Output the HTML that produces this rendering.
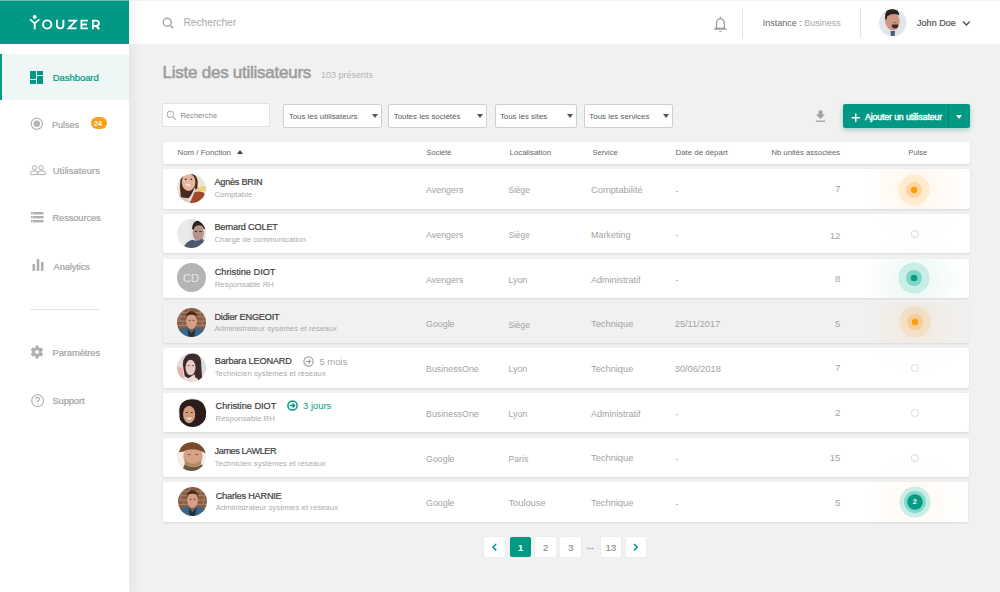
<!DOCTYPE html>
<html><head><meta charset="utf-8"><title>Youzer</title><style>
*{margin:0;padding:0;box-sizing:border-box}
html,body{width:1000px;height:592px;overflow:hidden;background:#f1f1f1;font-family:"Liberation Sans", sans-serif;position:relative}
.t{position:absolute;line-height:0;white-space:nowrap}
#side{position:absolute;left:0;top:0;width:129px;height:592px;background:#fff;box-shadow:0 0 16px rgba(0,0,0,0.09);z-index:0}
#logo{position:absolute;left:0;top:0;width:129px;height:44px;background:#029984}
#top{position:absolute;left:129px;top:0;width:871px;height:44px;background:#fff}
.box{position:absolute;background:#fff;border:1px solid #ddd;border-radius:2px}
.tri{position:absolute;width:0;height:0;border-left:3px solid transparent;border-right:3px solid transparent;border-top:4.5px solid #555}
.card{position:absolute;background:#fff;border-radius:2px;box-shadow:0 1px 2.5px rgba(0,0,0,0.1)}
.dot{position:absolute;border-radius:50%}
</style></head>
<body>
<div id="top"></div>
<div id="side"></div>
<div id="logo"></div>
<svg style="position:absolute;left:0;top:0" width="129" height="44" viewBox="0 0 129 44">
<g fill="none" stroke="#fff" stroke-width="1.85" stroke-linecap="butt" stroke-linejoin="miter">
<circle cx="34.7" cy="16.9" r="1.85" fill="#fff" stroke="none"/>
<path d="M30.6 19.9 L34.7 23.4 L38.8 19.9" stroke-linecap="round" stroke-width="1.8"/><path d="M34.7 23.2 V29.25" stroke-width="1.8"/>
<circle cx="47.2" cy="24.45" r="4.15"/>
<path d="M56.9 19.75 V25.3 Q56.9 28.4 60.15 28.4 Q63.4 28.4 63.4 25.3 V19.75"/>
<path d="M68.3 20.6 H75.9 L68.6 28.4 H76.5"/>
<path d="M87.8 20.6 H81.4 V28.4 H87.8 M81.4 24.5 H87"/>
<path d="M92.9 29.25 V20.6 H96 Q98.9 20.6 98.9 23.3 Q98.9 26 96 26 H92.9 M96.2 26 L99.3 29.25"/>
</g></svg>
<div style="position:absolute;left:0;top:54.4px;width:129px;height:45.2px;background:#eef7f5"></div>
<div style="position:absolute;left:0;top:54.4px;width:2px;height:45.2px;background:#029984"></div>
<svg style="position:absolute;left:30px;top:71px" width="14" height="14" viewBox="0 0 14 14">
<g fill="#029984"><rect x="0" y="0" width="6" height="8"/><rect x="0" y="9" width="6" height="4"/>
<rect x="7" y="0" width="6" height="4"/><rect x="7" y="5" width="6" height="8"/></g></svg>
<div class="t" style="left:52.70px;top:78.11px;font-size:9.5px;color:#029984;font-weight:400;letter-spacing:-0.05px;-webkit-text-stroke:0.22px #029984;">Dashboard</div>
<svg style="position:absolute;left:30px;top:117px" width="14" height="14" viewBox="0 0 14 14">
<circle cx="6.8" cy="6.8" r="5.6" fill="none" stroke="#b5b5b5" stroke-width="1.2"/>
<circle cx="6.8" cy="6.8" r="3.2" fill="#b5b5b5"/></svg>
<div class="t" style="left:52.00px;top:124.88px;font-size:9.0px;color:#a3a3a3;font-weight:400;letter-spacing:0px;-webkit-text-stroke:0.22px #a3a3a3;">Pulses</div>
<div style="position:absolute;left:90.7px;top:116.9px;width:16px;height:12.6px;border-radius:6.3px;background:#f9a11b"></div>
<div class="t" style="left:94.00px;top:123.67px;font-size:7.0px;color:#fff;font-weight:700;letter-spacing:0.1px;">24</div>
<svg style="position:absolute;left:29.5px;top:165px" width="16" height="11" viewBox="0 0 16 11">
<g fill="none" stroke="#b0b0b0" stroke-width="1">
<circle cx="4.5" cy="2.6" r="2.1"/><circle cx="11" cy="2.6" r="2.1"/>
<path d="M0.6 9.6 V8 Q0.6 6 3 6 H6.5 Q8 6 8 8 V9.6 Z"/><path d="M7.7 9.6 V8 Q7.7 6 10 6 H13 Q15.3 6 15.3 8 V9.6 Z"/>
</g></svg>
<div class="t" style="left:52.80px;top:170.88px;font-size:9.3px;color:#a3a3a3;font-weight:400;letter-spacing:0.1px;-webkit-text-stroke:0.22px #a3a3a3;">Utilisateurs</div>
<svg style="position:absolute;left:31px;top:212px" width="13" height="11" viewBox="0 0 13 11">
<g fill="#b0b0b0"><rect x="0" y="0" width="12.5" height="2.4"/><rect x="0" y="4" width="12.5" height="2.4"/><rect x="0" y="8" width="12.5" height="2.4"/></g>
<g fill="#fff"><rect x="1" y="0.8" width="1" height="0.8"/><rect x="1" y="4.8" width="1" height="0.8"/><rect x="1" y="8.8" width="1" height="0.8"/></g></svg>
<div class="t" style="left:52.50px;top:217.78px;font-size:9.3px;color:#a3a3a3;font-weight:400;letter-spacing:-0.1px;-webkit-text-stroke:0.22px #a3a3a3;">Ressources</div>
<svg style="position:absolute;left:32px;top:258px" width="13" height="13" viewBox="0 0 13 13">
<g fill="#b0b0b0"><rect x="0.5" y="6" width="2.6" height="6.9"/><rect x="4.7" y="1" width="2.6" height="11.9"/><rect x="8.9" y="4" width="2.6" height="8.9"/></g></svg>
<div class="t" style="left:53.60px;top:266.78px;font-size:9.3px;color:#a3a3a3;font-weight:400;letter-spacing:-0.1px;-webkit-text-stroke:0.22px #a3a3a3;">Analytics</div>
<div style="position:absolute;left:29.7px;top:308.6px;width:70px;height:1px;background:#e3e3e3"></div>
<svg style="position:absolute;left:29.1px;top:343.9px" width="16" height="16" viewBox="0 0 24 24">
<path fill="#b0b0b0" d="M19.14 12.94c.04-.3.06-.61.06-.94 0-.32-.02-.64-.07-.94l2.03-1.58a.49.49 0 0 0 .12-.61l-1.92-3.32a.49.49 0 0 0-.59-.22l-2.39.96c-.5-.38-1.03-.7-1.62-.94l-.36-2.54a.48.48 0 0 0-.48-.41h-3.84c-.24 0-.43.17-.47.41l-.36 2.54c-.59.24-1.13.57-1.62.94l-2.39-.96a.48.48 0 0 0-.59.22L2.74 8.87c-.12.21-.08.47.12.61l2.03 1.58c-.05.3-.09.63-.09.94s.02.64.07.94l-2.03 1.58a.49.49 0 0 0-.12.61l1.92 3.32c.12.22.37.29.59.22l2.39-.96c.5.38 1.03.7 1.62.94l.36 2.54c.05.24.24.41.48.41h3.84c.24 0 .44-.17.47-.41l.36-2.54c.59-.24 1.13-.56 1.62-.94l2.39.96c.22.08.47 0 .59-.22l1.92-3.32c.12-.22.07-.47-.12-.61l-2.01-1.58zM12 14.9c-1.6 0-2.9-1.3-2.9-2.9s1.3-2.9 2.9-2.9 2.9 1.3 2.9 2.9-1.3 2.9-2.9 2.9z"/></svg>
<div class="t" style="left:52.50px;top:353.38px;font-size:9.3px;color:#a3a3a3;font-weight:400;letter-spacing:-0.05px;-webkit-text-stroke:0.22px #a3a3a3;">Paramètres</div>
<svg style="position:absolute;left:30.5px;top:393.5px" width="14" height="14" viewBox="0 0 14 14">
<circle cx="6.6" cy="6.6" r="5.9" fill="none" stroke="#b0b0b0" stroke-width="1.1"/>
<path d="M4.8 5.2 Q4.8 3.3 6.6 3.3 Q8.4 3.3 8.4 5 Q8.4 6 7.4 6.6 Q6.6 7.1 6.6 8.1" fill="none" stroke="#b0b0b0" stroke-width="1.25"/>
<circle cx="6.6" cy="9.9" r="0.6" fill="#b0b0b0"/></svg>
<div class="t" style="left:52.50px;top:401.08px;font-size:9.3px;color:#a3a3a3;font-weight:400;letter-spacing:-0.1px;-webkit-text-stroke:0.22px #a3a3a3;">Support</div>
<svg style="position:absolute;left:162px;top:16.5px" width="13" height="12" viewBox="0 0 13 12">
<circle cx="5.2" cy="5.2" r="4" fill="none" stroke="#aaa" stroke-width="1.5"/><path d="M8.1 8.1 L11.3 11.2" stroke="#aaa" stroke-width="1.6"/></svg>
<div class="t" style="left:183.50px;top:23.37px;font-size:10.2px;color:#a8a8a8;font-weight:400;letter-spacing:0px;">Rechercher</div>
<svg style="position:absolute;left:713px;top:15px" width="15" height="18" viewBox="0 0 15 18">
<path d="M3.5 14 V8.6 Q3.5 3.9 7.4 3.9 Q11.3 3.9 11.3 8.6 V14" fill="none" stroke="#a3a3a3" stroke-width="1.4"/>
<path d="M1.2 14.4 H13.6 L12.2 13 H2.6 Z" fill="#a3a3a3" stroke="#a3a3a3" stroke-width="0.8" stroke-linejoin="round"/>
<path d="M7.4 1.6 V4" stroke="#a3a3a3" stroke-width="1.6"/><path d="M6.2 16.5 H8.6" stroke="#a3a3a3" stroke-width="1"/></svg>
<div style="position:absolute;left:742.3px;top:7px;width:1px;height:30.5px;background:#e4e4e4"></div>
<div style="position:absolute;left:860.2px;top:7px;width:1px;height:30.5px;background:#e4e4e4"></div>
<div class="t" style="left:762.70px;top:22.78px;font-size:9.0px;color:#666;font-weight:400;letter-spacing:0px;">Instance : <span style="color:#a5a5a5">Business</span></div>
<div class="t" style="left:917.00px;top:23.08px;font-size:9.0px;color:#505050;font-weight:400;letter-spacing:0.05px;-webkit-text-stroke:0.2px #505050;">John Doe</div>
<svg style="position:absolute;left:962px;top:20px" width="9" height="7" viewBox="0 0 9 7">
<path d="M1 1.5 L4.4 5 L7.8 1.5" fill="none" stroke="#555" stroke-width="1.5"/></svg>
<svg style="position:absolute;left:879.25px;top:8.55px" width="27.5" height="27.5" viewBox="0 0 30 30"><defs><clipPath id="cj"><circle cx="15" cy="15" r="15"/></clipPath><filter id="fj" x="-5%" y="-5%" width="110%" height="110%"><feGaussianBlur stdDeviation="0.45"/></filter></defs><g clip-path="url(#cj)"><g filter="url(#fj)"><rect width="30" height="30" fill="#e3e5ea"/>
   <path d="M4 30 L5 22 Q14 19 25 21 L27 30 Z" fill="#dce5f0"/>
   <ellipse cx="14.5" cy="13" rx="8" ry="10.5" fill="#cc9a82" transform="rotate(-12 14.5 13)"/>
   <path d="M6.5 10 Q6 0 14 0 Q22 0 22 7 L20 6 Q14 4 9 8 L8 12 Z" fill="#2b2420"/>
   <ellipse cx="17.5" cy="18" rx="3.4" ry="3.2" fill="#4a2222"/>
   <path d="M14.5 16.2 H20.5" stroke="#f0e8e4" stroke-width="1"/>
   <path d="M12.5 24 L17.5 24 L17 30 L13 30 Z" fill="#4d5b74"/></g></g></svg>
<div class="t" style="left:162.60px;top:72.71px;font-size:17.0px;color:#9d9d9d;font-weight:400;letter-spacing:-0.25px;-webkit-text-stroke:0.55px #9d9d9d;">Liste des utilisateurs</div>
<div class="t" style="left:321.00px;top:74.88px;font-size:9.0px;color:#b3b3b3;font-weight:400;letter-spacing:0px;">103 présents</div>
<div class="box" style="left:162.2px;top:103.4px;width:107.5px;height:24px;border-color:#e2e2e2"></div>
<svg style="position:absolute;left:165.5px;top:110px" width="11" height="11" viewBox="0 0 11 11">
<circle cx="4.3" cy="4.3" r="3.3" fill="none" stroke="#aaa" stroke-width="1"/><path d="M6.7 6.7 L9.6 9.6" stroke="#aaa" stroke-width="1.1"/></svg>
<div class="t" style="left:180.40px;top:116.47px;font-size:7.6px;color:#8a8a8a;font-weight:400;letter-spacing:0px;">Recherche</div>
<div class="box" style="left:283.4px;top:104px;width:99.1px;height:24px;border-color:#cfcfcf"></div>
<div class="t" style="left:288.70px;top:117.36px;font-size:7.9px;color:#5a5a5a;font-weight:400;letter-spacing:0px;">Tous les utilisateurs</div>
<div class="tri" style="left:372.0px;top:114px"></div>
<div class="box" style="left:388.4px;top:104px;width:99.0px;height:24px;border-color:#cfcfcf"></div>
<div class="t" style="left:393.70px;top:117.36px;font-size:7.9px;color:#5a5a5a;font-weight:400;letter-spacing:0px;">Toutes les sociétés</div>
<div class="tri" style="left:476.9px;top:114px"></div>
<div class="box" style="left:494.6px;top:104px;width:82.8px;height:24px;border-color:#cfcfcf"></div>
<div class="t" style="left:499.90px;top:117.36px;font-size:7.9px;color:#5a5a5a;font-weight:400;letter-spacing:0px;">Tous les sites</div>
<div class="tri" style="left:566.9px;top:114px"></div>
<div class="box" style="left:584.0px;top:104px;width:89.1px;height:24px;border-color:#cfcfcf"></div>
<div class="t" style="left:589.30px;top:117.36px;font-size:7.9px;color:#5a5a5a;font-weight:400;letter-spacing:0px;">Tous les services</div>
<div class="tri" style="left:662.6px;top:114px"></div>
<svg style="position:absolute;left:815px;top:109.5px" width="11" height="13" viewBox="0 0 11 13">
<path d="M3.5 0.5 H7.5 V4.5 H10 L5.5 9 L1 4.5 H3.5 Z" fill="#a3a3a3"/><rect x="0.8" y="10.5" width="9.4" height="1.4" fill="#a3a3a3"/></svg>
<div style="position:absolute;left:843px;top:104px;width:126.5px;height:23.5px;border-radius:2px;background:#029984;box-shadow:0 2px 5px rgba(2,153,132,0.35)"></div>
<div style="position:absolute;left:948.3px;top:104px;width:0.8px;height:23.5px;background:rgba(0,0,0,0.12)"></div>
<svg style="position:absolute;left:851px;top:112.5px" width="10" height="10" viewBox="0 0 10 10">
<path d="M4.7 0.6 V9 M0.6 4.8 H8.9" stroke="#fff" stroke-width="1.5"/></svg>
<div class="t" style="left:865.00px;top:116.79px;font-size:8.7px;color:#fff;font-weight:400;letter-spacing:-0.1px;-webkit-text-stroke:0.4px #fff;">Ajouter un utilisateur</div>
<div class="tri" style="left:955.5px;top:115px;border-top-color:#fff;border-left-width:3.4px;border-right-width:3.4px;border-top-width:4px"></div>
<div class="card" style="left:162.5px;top:141.8px;width:807.5px;height:22.3px"></div>
<div class="t" style="left:177.50px;top:153.26px;font-size:7.9px;color:#666;font-weight:400;letter-spacing:0px;">Nom / Fonction</div>
<div class="tri" style="left:236.9px;top:150.3px;border-top:0;border-bottom:4px solid #444;border-left-width:3px;border-right-width:3px"></div>
<div class="t" style="left:426.50px;top:153.40px;font-size:7.5px;color:#666;font-weight:400;letter-spacing:0px;">Société</div>
<div class="t" style="left:509.60px;top:153.28px;font-size:7.85px;color:#666;font-weight:400;letter-spacing:0px;">Localisation</div>
<div class="t" style="left:592.40px;top:153.37px;font-size:7.6px;color:#666;font-weight:400;letter-spacing:0px;">Service</div>
<div class="t" style="left:675.50px;top:153.26px;font-size:7.9px;color:#666;font-weight:400;letter-spacing:0px;">Date de départ</div>
<div class="t" style="left:771.40px;top:153.33px;font-size:7.7px;color:#666;font-weight:400;letter-spacing:0px;">Nb unités associées</div>
<div class="t" style="left:908.50px;top:153.42px;font-size:7.45px;color:#666;font-weight:400;letter-spacing:0px;">Pulse</div>
<div class="card" style="left:162.5px;top:169.20px;width:807.30px;height:39.4px;background:#fff;overflow:hidden"><div style="position:absolute;left:702.0px;top:-29.60px;width:100px;height:100px;background:radial-gradient(circle 50px at 50px 50px, rgba(255,170,60,0.110), rgba(255,170,60,0.050) 55%, rgba(255,170,60,0) 100%)"></div></div>
<div class="card" style="left:162.5px;top:213.94px;width:807.10px;height:39.4px;background:#fff;overflow:hidden"><div style="position:absolute;left:702.0px;top:-74.34px;width:100px;height:100px;background:radial-gradient(circle 50px at 50px 50px, rgba(255,170,60,0.044), rgba(255,170,60,0.020) 55%, rgba(255,170,60,0) 100%)"></div><div style="position:absolute;left:702.0px;top:15.14px;width:100px;height:100px;background:radial-gradient(circle 50px at 50px 50px, rgba(60,190,170,0.044), rgba(60,190,170,0.020) 55%, rgba(60,190,170,0) 100%)"></div></div>
<div class="card" style="left:162.5px;top:258.68px;width:806.90px;height:39.4px;background:#fff;overflow:hidden"><div style="position:absolute;left:702.0px;top:-29.60px;width:100px;height:100px;background:radial-gradient(circle 50px at 50px 50px, rgba(60,190,170,0.110), rgba(60,190,170,0.050) 55%, rgba(60,190,170,0) 100%)"></div><div style="position:absolute;left:702.0px;top:15.14px;width:100px;height:100px;background:radial-gradient(circle 50px at 50px 50px, rgba(255,170,60,0.044), rgba(255,170,60,0.020) 55%, rgba(255,170,60,0) 100%)"></div></div>
<div class="card" style="left:162.5px;top:303.42px;width:806.70px;height:39.4px;background:#f1f1f1;overflow:hidden"><div style="position:absolute;left:702.0px;top:-74.34px;width:100px;height:100px;background:radial-gradient(circle 50px at 50px 50px, rgba(60,190,170,0.044), rgba(60,190,170,0.020) 55%, rgba(60,190,170,0) 100%)"></div><div style="position:absolute;left:702.0px;top:-29.60px;width:100px;height:100px;background:radial-gradient(circle 50px at 50px 50px, rgba(255,170,60,0.110), rgba(255,170,60,0.050) 55%, rgba(255,170,60,0) 100%)"></div></div>
<div class="card" style="left:162.5px;top:348.16px;width:806.50px;height:39.4px;background:#fff;overflow:hidden"><div style="position:absolute;left:702.0px;top:-74.34px;width:100px;height:100px;background:radial-gradient(circle 50px at 50px 50px, rgba(255,170,60,0.044), rgba(255,170,60,0.020) 55%, rgba(255,170,60,0) 100%)"></div></div>
<div class="card" style="left:162.5px;top:392.90px;width:806.30px;height:39.4px;background:#fff;overflow:hidden"></div>
<div class="card" style="left:162.5px;top:437.64px;width:806.10px;height:39.4px;background:#fff;overflow:hidden"><div style="position:absolute;left:702.0px;top:15.14px;width:100px;height:100px;background:radial-gradient(circle 50px at 50px 50px, rgba(255,200,140,0.044), rgba(255,200,140,0.020) 55%, rgba(255,200,140,0) 100%)"></div></div>
<div class="card" style="left:162.5px;top:482.38px;width:805.90px;height:39.4px;background:#fff;overflow:hidden"><div style="position:absolute;left:702.0px;top:-29.60px;width:100px;height:100px;background:radial-gradient(circle 50px at 50px 50px, rgba(255,200,140,0.110), rgba(255,200,140,0.050) 55%, rgba(255,200,140,0) 100%)"></div></div>
<svg style="position:absolute;left:177.00px;top:174.00px" width="29" height="29" viewBox="0 0 30 30"><defs><clipPath id="c0"><circle cx="15" cy="15" r="15"/></clipPath><filter id="f0" x="-5%" y="-5%" width="110%" height="110%"><feGaussianBlur stdDeviation="0.45"/></filter></defs><g clip-path="url(#c0)"><g filter="url(#f0)"><rect width="30" height="30" fill="#ede2d6"/>
   <path d="M18 0 H30 V20 L22 16 Z" fill="#ece2d6"/>
   <path d="M19 14 L30 12.5 L30 17.5 L21 17.5 Z" fill="#ecd27a"/>
   <path d="M2 30 V21 L9 22 L13 30 Z" fill="#d6cdc4"/>
   <path d="M3.5 6 Q5 -1 13 -0.5 Q21 0 21.5 8 L21 15 L17 19 L12 25 L4 24 L3 14 Z" fill="#4b2c20"/>
   <ellipse cx="12" cy="8.5" rx="7" ry="9" fill="#e6b69c"/>
   <ellipse cx="9" cy="5.5" rx="1" ry="0.8" fill="#3a2a22"/><ellipse cx="14.8" cy="5.5" rx="1" ry="0.8" fill="#3a2a22"/>
   <path d="M8.5 10.8 Q11.3 14.2 14.2 10.8 Z" fill="#fbf4f0"/>
   <path d="M13 30 L17.5 19 Q22 17 27 19 L30 22 V30 Z" fill="#a14a2a"/>
   <path d="M11 30 L18 14.5 L19.6 15.3 L13.2 30 Z" fill="#dcd8d4"/></g></g></svg>
<div class="t" style="left:214.40px;top:182.41px;font-size:9.2px;color:#3f3f3f;font-weight:400;letter-spacing:-0.25px;-webkit-text-stroke:0.22px #3f3f3f;">Agnès BRIN</div>
<div class="t" style="left:214.40px;top:195.18px;font-size:7.85px;color:#ababab;font-weight:400;letter-spacing:0px;">Comptable</div>
<div class="t" style="left:426.00px;top:190.12px;font-size:8.9px;color:#a3a3a3;font-weight:400;letter-spacing:0px;">Avengers</div>
<div class="t" style="left:508.40px;top:190.29px;font-size:8.4px;color:#a3a3a3;font-weight:400;letter-spacing:0px;">Siège</div>
<div class="t" style="left:591.00px;top:189.98px;font-size:9.3px;color:#a3a3a3;font-weight:400;letter-spacing:0px;">Comptabilité</div>
<div class="t" style="left:675.50px;top:191.66px;font-size:8.2px;color:#a3a3a3;font-weight:400;letter-spacing:0px;">-</div>
<div class="t" style="right:159.60px;top:189.47px;font-size:9.6px;color:#a3a3a3;font-weight:400;letter-spacing:0px;">7</div>
<svg style="position:absolute;left:177.00px;top:218.74px" width="29" height="29" viewBox="0 0 30 30"><defs><clipPath id="c1"><circle cx="15" cy="15" r="15"/></clipPath><filter id="f1" x="-5%" y="-5%" width="110%" height="110%"><feGaussianBlur stdDeviation="0.45"/></filter></defs><g clip-path="url(#c1)"><g filter="url(#f1)"><rect width="30" height="30" fill="#e2e2e2"/>
   <rect x="0" y="0" width="13" height="30" fill="#eaeaea"/>
   <ellipse cx="22" cy="14.5" rx="5.8" ry="8.6" fill="#b49486"/>
   <path d="M15.5 10 Q16 1.5 23 1.5 Q30 1.5 29 10.5 L27.5 10 Q26 6 22 6.5 Q18 7 17 11.5 Z" fill="#2a2320"/>
   <path d="M18.5 13 H21 M23 13 H25.8" stroke="#3a2e2a" stroke-width="1"/>
   <path d="M6 30 Q10 23 16 21.5 Q21 24 26 20.5 L29 23 V30 Z" fill="#4b5a70"/></g></g></svg>
<div class="t" style="left:214.40px;top:227.15px;font-size:9.2px;color:#3f3f3f;font-weight:400;letter-spacing:-0.19px;-webkit-text-stroke:0.22px #3f3f3f;">Bernard COLET</div>
<div class="t" style="left:214.40px;top:239.92px;font-size:7.85px;color:#ababab;font-weight:400;letter-spacing:0px;">Chargé de communication</div>
<div class="t" style="left:426.00px;top:234.86px;font-size:8.9px;color:#a3a3a3;font-weight:400;letter-spacing:0px;">Avengers</div>
<div class="t" style="left:508.40px;top:235.03px;font-size:8.4px;color:#a3a3a3;font-weight:400;letter-spacing:0px;">Siège</div>
<div class="t" style="left:591.00px;top:234.82px;font-size:9.0px;color:#a3a3a3;font-weight:400;letter-spacing:0px;">Marketing</div>
<div class="t" style="left:675.50px;top:236.40px;font-size:8.2px;color:#a3a3a3;font-weight:400;letter-spacing:0px;">-</div>
<div class="t" style="right:159.60px;top:235.81px;font-size:9.6px;color:#a3a3a3;font-weight:400;letter-spacing:0px;">12</div>
<svg style="position:absolute;left:177.00px;top:263.48px" width="29" height="29" viewBox="0 0 30 30"><defs><clipPath id="c2"><circle cx="15" cy="15" r="15"/></clipPath><filter id="f2" x="-5%" y="-5%" width="110%" height="110%"><feGaussianBlur stdDeviation="0.45"/></filter></defs><g clip-path="url(#c2)"><g filter="url(#f2)"><rect width="30" height="30" fill="#b4b4b4"/></g></g></svg>
<div class="t" style="left:183.00px;top:278.00px;font-size:11.2px;color:#e6e6e6;font-weight:400;letter-spacing:0px;">CD</div>
<div class="t" style="left:214.70px;top:271.89px;font-size:9.2px;color:#3f3f3f;font-weight:400;letter-spacing:0px;-webkit-text-stroke:0.22px #3f3f3f;">Christine DIOT</div>
<div class="t" style="left:214.70px;top:284.66px;font-size:7.85px;color:#ababab;font-weight:400;letter-spacing:0px;">Responsable RH</div>
<div class="t" style="left:426.00px;top:279.60px;font-size:8.9px;color:#a3a3a3;font-weight:400;letter-spacing:0px;">Avengers</div>
<div class="t" style="left:508.40px;top:279.60px;font-size:8.9px;color:#a3a3a3;font-weight:400;letter-spacing:0px;">Lyon</div>
<div class="t" style="left:591.00px;top:279.56px;font-size:9.0px;color:#a3a3a3;font-weight:400;letter-spacing:0px;">Administratif</div>
<div class="t" style="left:675.50px;top:281.14px;font-size:8.2px;color:#a3a3a3;font-weight:400;letter-spacing:0px;">-</div>
<div class="t" style="right:159.60px;top:278.95px;font-size:9.6px;color:#a3a3a3;font-weight:400;letter-spacing:0px;">8</div>
<svg style="position:absolute;left:177.10px;top:308.22px" width="29" height="29" viewBox="0 0 30 30"><defs><clipPath id="c3"><circle cx="15" cy="15" r="15"/></clipPath><filter id="f3" x="-5%" y="-5%" width="110%" height="110%"><feGaussianBlur stdDeviation="0.45"/></filter></defs><g clip-path="url(#c3)"><g filter="url(#f3)"><rect width="30" height="30" fill="#8c5c40"/>
   <path d="M0 4.5 H30 M0 9 H30 M0 13.5 H30 M0 18 H30" stroke="#a89080" stroke-width="0.9"/>
   <path d="M4 4.5 V9 M12 0 V4.5 M24 4.5 V9 M6 13.5 V18 M26 13.5 V18 M3 9 V13.5 M27 9 V13.5" stroke="#a89080" stroke-width="0.7"/>
   <ellipse cx="15" cy="13.8" rx="5.6" ry="8" fill="#d4a08a"/>
   <path d="M9.2 11 Q9 3.5 15 3.3 Q21 3.5 20.8 11 L19.8 8.2 Q15 6 10.2 8.2 Z" fill="#4a2a18"/>
   <path d="M12.2 12.8 H14 M16.2 12.8 H18" stroke="#4a3430" stroke-width="0.9"/>
   <path d="M0 30 V24 Q5 20.5 10 20 L15 24.5 L20 20 Q25 20.5 30 24 V30 Z" fill="#3a6684"/>
   <path d="M11 21.5 L15 26 L19 21.5 L18 30 H12 Z" fill="#22323e"/></g></g></svg>
<div class="t" style="left:214.40px;top:316.63px;font-size:9.2px;color:#3f3f3f;font-weight:400;letter-spacing:-0.2px;-webkit-text-stroke:0.22px #3f3f3f;">Didier ENGEOIT</div>
<div class="t" style="left:214.40px;top:329.40px;font-size:7.85px;color:#ababab;font-weight:400;letter-spacing:0px;">Administrateur sysèmes et réseaux</div>
<div class="t" style="left:426.00px;top:324.35px;font-size:8.85px;color:#a3a3a3;font-weight:400;letter-spacing:0px;">Google</div>
<div class="t" style="left:508.40px;top:324.51px;font-size:8.4px;color:#a3a3a3;font-weight:400;letter-spacing:0px;">Siège</div>
<div class="t" style="left:591.00px;top:324.20px;font-size:9.3px;color:#a3a3a3;font-weight:400;letter-spacing:0px;">Technique</div>
<div class="t" style="left:674.80px;top:324.23px;font-size:9.2px;color:#a3a3a3;font-weight:400;letter-spacing:0px;">25/11/2017</div>
<div class="t" style="right:159.60px;top:323.69px;font-size:9.6px;color:#a3a3a3;font-weight:400;letter-spacing:0px;">5</div>
<svg style="position:absolute;left:177.00px;top:352.96px" width="29" height="29" viewBox="0 0 30 30"><defs><clipPath id="c4"><circle cx="15" cy="15" r="15"/></clipPath><filter id="f4" x="-5%" y="-5%" width="110%" height="110%"><feGaussianBlur stdDeviation="0.45"/></filter></defs><g clip-path="url(#c4)"><g filter="url(#f4)"><rect width="30" height="30" fill="#e6dde0"/>
   <path d="M0 14 L6 16 L7 26 L0 26 Z" fill="#e9b0b0"/>
   <path d="M22 4 L30 8 V20 L25 22 Z" fill="#d8e0da"/>
   <path d="M6 12 Q6.5 0.5 16 0.5 Q25.5 0.5 25 12 L26 26 Q23 30 20 28 L18 22 L12 26 L8 24 Z" fill="#3c2a2a"/>
   <ellipse cx="14" cy="15" rx="5.2" ry="8" fill="#e6cbc4"/>
   <path d="M11 13 H13 M15.5 13 H17.5" stroke="#6a4a48" stroke-width="0.9"/>
   <path d="M10 30 Q14 25 21 26 L23 30 Z" fill="#efdad2"/></g></g></svg>
<div class="t" style="left:214.70px;top:361.37px;font-size:9.2px;color:#3f3f3f;font-weight:400;letter-spacing:-0.17px;-webkit-text-stroke:0.22px #3f3f3f;">Barbara LEONARD</div>
<div class="t" style="left:214.70px;top:374.14px;font-size:7.85px;color:#ababab;font-weight:400;letter-spacing:0px;">Technicien systèmes et réseaux</div>
<svg style="position:absolute;left:303.3px;top:355.7px" width="11" height="11" viewBox="0 0 11 11">
<circle cx="5.5" cy="5.5" r="4.6" fill="none" stroke="#a5a5a5" stroke-width="1.2"/>
<path d="M2.8 5.5 H7.6 M5.6 3.5 L7.6 5.5 L5.6 7.5" fill="none" stroke="#a5a5a5" stroke-width="1.2"/></svg>
<div class="t" style="left:319.50px;top:362.10px;font-size:9.4px;color:#a5a5a5;font-weight:400;letter-spacing:0px;">5 mois</div>
<div class="t" style="left:426.00px;top:369.08px;font-size:8.9px;color:#a3a3a3;font-weight:400;letter-spacing:0px;">BusinessOne</div>
<div class="t" style="left:508.40px;top:369.08px;font-size:8.9px;color:#a3a3a3;font-weight:400;letter-spacing:0px;">Lyon</div>
<div class="t" style="left:591.00px;top:368.94px;font-size:9.3px;color:#a3a3a3;font-weight:400;letter-spacing:0px;">Technique</div>
<div class="t" style="left:674.80px;top:368.97px;font-size:9.2px;color:#a3a3a3;font-weight:400;letter-spacing:0px;">30/06/2018</div>
<div class="t" style="right:159.60px;top:368.43px;font-size:9.6px;color:#a3a3a3;font-weight:400;letter-spacing:0px;">7</div>
<svg style="position:absolute;left:177.50px;top:397.70px" width="29" height="29" viewBox="0 0 30 30"><defs><clipPath id="c5"><circle cx="15" cy="15" r="15"/></clipPath><filter id="f5" x="-5%" y="-5%" width="110%" height="110%"><feGaussianBlur stdDeviation="0.45"/></filter></defs><g clip-path="url(#c5)"><g filter="url(#f5)"><rect width="30" height="30" fill="#f2eeec"/>
   <path d="M1.5 16 Q0 3 12 1.5 Q27 0 29 14 Q30 27 20 30 L6 30 Q1 25 1.5 16 Z" fill="#2a1c1a"/>
   <ellipse cx="11.5" cy="17" rx="6.3" ry="9" fill="#d59c7e"/>
   <path d="M8 15 H10.3 M13 15 H15.3" stroke="#4a302a" stroke-width="0.9"/>
   <path d="M8.5 20.5 Q11.5 24 14.8 20.5 Z" fill="#fbf2ee"/></g></g></svg>
<div class="t" style="left:215.60px;top:406.11px;font-size:9.2px;color:#3f3f3f;font-weight:400;letter-spacing:0px;-webkit-text-stroke:0.22px #3f3f3f;">Christine DIOT</div>
<div class="t" style="left:215.60px;top:418.88px;font-size:7.85px;color:#ababab;font-weight:400;letter-spacing:0px;">Responsable RH</div>
<svg style="position:absolute;left:286.9px;top:400.4px" width="11" height="11" viewBox="0 0 11 11">
<circle cx="5.5" cy="5.5" r="4.6" fill="none" stroke="#029984" stroke-width="1.5"/>
<path d="M2.8 5.5 H7.6 M5.6 3.5 L7.6 5.5 L5.6 7.5" fill="none" stroke="#029984" stroke-width="1.4"/></svg>
<div class="t" style="left:303.10px;top:406.14px;font-size:9.4px;color:#029984;font-weight:400;letter-spacing:0px;">3 jours</div>
<div class="t" style="left:426.00px;top:413.82px;font-size:8.9px;color:#a3a3a3;font-weight:400;letter-spacing:0px;">BusinessOne</div>
<div class="t" style="left:508.40px;top:413.82px;font-size:8.9px;color:#a3a3a3;font-weight:400;letter-spacing:0px;">Lyon</div>
<div class="t" style="left:591.00px;top:413.78px;font-size:9.0px;color:#a3a3a3;font-weight:400;letter-spacing:0px;">Administratif</div>
<div class="t" style="left:675.50px;top:415.36px;font-size:8.2px;color:#a3a3a3;font-weight:400;letter-spacing:0px;">-</div>
<div class="t" style="right:159.60px;top:413.17px;font-size:9.6px;color:#a3a3a3;font-weight:400;letter-spacing:0px;">2</div>
<svg style="position:absolute;left:177.30px;top:442.44px" width="29" height="29" viewBox="0 0 30 30"><defs><clipPath id="c6"><circle cx="15" cy="15" r="15"/></clipPath><filter id="f6" x="-5%" y="-5%" width="110%" height="110%"><feGaussianBlur stdDeviation="0.45"/></filter></defs><g clip-path="url(#c6)"><g filter="url(#f6)"><rect width="30" height="30" fill="#f6ede2"/>
   <ellipse cx="16.5" cy="15" rx="10" ry="10.5" fill="#d6a288"/>
   <path d="M2 10.5 Q5 0 16 0 Q27 0 30 12 L26.5 10 Q16 5 6 10 Z" fill="#7a4a2e"/>
   <path d="M11 13 H14 M19 13 H22" stroke="#6a4a3a" stroke-width="0.9"/>
   <path d="M8 18 Q16.5 27 25 18 L25 23 Q16.5 29 8 23 Z" fill="#b48862"/>
   <path d="M5 30 L8 23 Q16.5 29 26 23 L28 30 Z" fill="#6c5840"/></g></g></svg>
<div class="t" style="left:214.60px;top:450.85px;font-size:9.2px;color:#3f3f3f;font-weight:400;letter-spacing:-0.46px;-webkit-text-stroke:0.22px #3f3f3f;">James LAWLER</div>
<div class="t" style="left:214.60px;top:463.62px;font-size:7.85px;color:#ababab;font-weight:400;letter-spacing:0px;">Technicien systèmes et réseaux</div>
<div class="t" style="left:426.00px;top:458.57px;font-size:8.85px;color:#a3a3a3;font-weight:400;letter-spacing:0px;">Google</div>
<div class="t" style="left:508.40px;top:458.61px;font-size:8.75px;color:#a3a3a3;font-weight:400;letter-spacing:0px;">Paris</div>
<div class="t" style="left:591.00px;top:458.42px;font-size:9.3px;color:#a3a3a3;font-weight:400;letter-spacing:0px;">Technique</div>
<div class="t" style="left:675.50px;top:460.10px;font-size:8.2px;color:#a3a3a3;font-weight:400;letter-spacing:0px;">-</div>
<div class="t" style="right:159.60px;top:457.91px;font-size:9.6px;color:#a3a3a3;font-weight:400;letter-spacing:0px;">15</div>
<svg style="position:absolute;left:178.10px;top:487.18px" width="29" height="29" viewBox="0 0 30 30"><defs><clipPath id="c7"><circle cx="15" cy="15" r="15"/></clipPath><filter id="f7" x="-5%" y="-5%" width="110%" height="110%"><feGaussianBlur stdDeviation="0.45"/></filter></defs><g clip-path="url(#c7)"><g filter="url(#f7)"><rect width="30" height="30" fill="#8c5c40"/>
   <path d="M0 4.5 H30 M0 9 H30 M0 13.5 H30 M0 18 H30" stroke="#a89080" stroke-width="0.9"/>
   <path d="M4 4.5 V9 M12 0 V4.5 M24 4.5 V9 M6 13.5 V18 M26 13.5 V18 M3 9 V13.5 M27 9 V13.5" stroke="#a89080" stroke-width="0.7"/>
   <ellipse cx="15" cy="13.8" rx="5.6" ry="8" fill="#d4a08a"/>
   <path d="M9.2 11 Q9 3.5 15 3.3 Q21 3.5 20.8 11 L19.8 8.2 Q15 6 10.2 8.2 Z" fill="#4a2a18"/>
   <path d="M12.2 12.8 H14 M16.2 12.8 H18" stroke="#4a3430" stroke-width="0.9"/>
   <path d="M0 30 V24 Q5 20.5 10 20 L15 24.5 L20 20 Q25 20.5 30 24 V30 Z" fill="#3a6684"/>
   <path d="M11 21.5 L15 26 L19 21.5 L18 30 H12 Z" fill="#22323e"/></g></g></svg>
<div class="t" style="left:215.70px;top:495.59px;font-size:9.2px;color:#3f3f3f;font-weight:400;letter-spacing:-0.22px;-webkit-text-stroke:0.22px #3f3f3f;">Charles HARNIE</div>
<div class="t" style="left:215.70px;top:508.36px;font-size:7.85px;color:#ababab;font-weight:400;letter-spacing:0px;">Administrateur sysèmes et réseaux</div>
<div class="t" style="left:426.00px;top:503.31px;font-size:8.85px;color:#a3a3a3;font-weight:400;letter-spacing:0px;">Google</div>
<div class="t" style="left:508.40px;top:503.16px;font-size:9.3px;color:#a3a3a3;font-weight:400;letter-spacing:0px;">Toulouse</div>
<div class="t" style="left:591.00px;top:503.16px;font-size:9.3px;color:#a3a3a3;font-weight:400;letter-spacing:0px;">Technique</div>
<div class="t" style="left:675.50px;top:504.84px;font-size:8.2px;color:#a3a3a3;font-weight:400;letter-spacing:0px;">-</div>
<div class="t" style="right:159.60px;top:502.65px;font-size:9.6px;color:#a3a3a3;font-weight:400;letter-spacing:0px;">5</div>
<svg style="position:absolute;left:894.40px;top:169.80px;filter:blur(0.3px)" width="40" height="40" viewBox="0 0 40 40"><circle cx="20" cy="20" r="15.6" fill="rgba(255,165,50,0.16)" stroke="none" stroke-width="0"/><circle cx="20" cy="20" r="8" fill="rgba(255,165,50,0.3)" stroke="none" stroke-width="0"/><circle cx="20" cy="20" r="3.2" fill="#fd9d0b" stroke="none" stroke-width="0"/></svg>
<svg style="position:absolute;left:894.80px;top:213.94px;filter:blur(0.3px)" width="40" height="40" viewBox="0 0 40 40"><circle cx="20" cy="20" r="3.6" fill="#fff" stroke="#d9d9d9" stroke-width="0.9"/></svg>
<svg style="position:absolute;left:894.40px;top:258.28px;filter:blur(0.3px)" width="40" height="40" viewBox="0 0 40 40"><circle cx="20" cy="20" r="15.6" fill="#c8eee7" stroke="none" stroke-width="0"/><circle cx="20" cy="20" r="8" fill="#7fd6c6" stroke="none" stroke-width="0"/><circle cx="20" cy="20" r="3.3" fill="#069c86" stroke="none" stroke-width="0"/></svg>
<svg style="position:absolute;left:895.00px;top:302.32px;filter:blur(0.3px)" width="40" height="40" viewBox="0 0 40 40"><circle cx="20" cy="20" r="15.6" fill="rgba(255,165,50,0.16)" stroke="none" stroke-width="0"/><circle cx="20" cy="20" r="8" fill="rgba(255,165,50,0.3)" stroke="none" stroke-width="0"/><circle cx="20" cy="20" r="3.2" fill="#fd9d0b" stroke="none" stroke-width="0"/></svg>
<svg style="position:absolute;left:894.80px;top:347.96px;filter:blur(0.3px)" width="40" height="40" viewBox="0 0 40 40"><circle cx="20" cy="20" r="3.6" fill="#fff" stroke="#d9d9d9" stroke-width="0.9"/></svg>
<svg style="position:absolute;left:894.80px;top:392.50px;filter:blur(0.3px)" width="40" height="40" viewBox="0 0 40 40"><circle cx="20" cy="20" r="3.6" fill="#fff" stroke="#d9d9d9" stroke-width="0.9"/></svg>
<svg style="position:absolute;left:894.80px;top:437.64px;filter:blur(0.3px)" width="40" height="40" viewBox="0 0 40 40"><circle cx="20" cy="20" r="3.6" fill="#fff" stroke="#d9d9d9" stroke-width="0.9"/></svg>
<svg style="position:absolute;left:895.00px;top:482.28px;filter:blur(0.3px)" width="40" height="40" viewBox="0 0 40 40"><circle cx="20" cy="20" r="15.6" fill="#c8eee7" stroke="none" stroke-width="0"/><circle cx="20" cy="20" r="11" fill="#86d9ca" stroke="none" stroke-width="0"/><circle cx="20" cy="20" r="7.8" fill="#089c86" stroke="none" stroke-width="0"/></svg>
<div class="t" style="left:912.70px;top:502.29px;font-size:7.2px;color:#fff;font-weight:700;letter-spacing:0px;">2</div>
<div style="position:absolute;left:0;top:0;width:1000px;height:1px;background:rgba(230,230,230,0.45)"></div>
<div style="position:absolute;left:484.4px;top:536.5px;width:20.8px;height:20.5px;border-radius:2px;background:#fff;box-shadow:0 0 0 0.6px #e8edf0"></div>
<svg style="position:absolute;left:491.2px;top:542.8px" width="8" height="9" viewBox="0 0 8 9"><path d="M5.2 1 L2 4.2 L5.2 7.4" fill="none" stroke="#029984" stroke-width="1.5"/></svg>
<div style="position:absolute;left:510px;top:536.5px;width:21.0px;height:20.5px;border-radius:2px;background:#029984;box-shadow:0 0 0 0.6px #e8edf0"></div>
<div class="t" style="left:510px;width:21.0px;text-align:center;top:547.58px;font-size:9.3px;color:#fff;font-weight:700;">1</div>
<div style="position:absolute;left:535.2px;top:536.5px;width:20.8px;height:20.5px;border-radius:2px;background:#fff;box-shadow:0 0 0 0.6px #e8edf0"></div>
<div class="t" style="left:535.2px;width:20.8px;text-align:center;top:547.58px;font-size:9.3px;color:#8c8c8c;font-weight:400;-webkit-text-stroke:0.15px #8c8c8c;">2</div>
<div style="position:absolute;left:560.4px;top:536.5px;width:20.8px;height:20.5px;border-radius:2px;background:#fff;box-shadow:0 0 0 0.6px #e8edf0"></div>
<div class="t" style="left:560.4px;width:20.8px;text-align:center;top:547.58px;font-size:9.3px;color:#8c8c8c;font-weight:400;-webkit-text-stroke:0.15px #8c8c8c;">3</div>
<div style="position:absolute;left:601px;top:536.5px;width:20.0px;height:20.5px;border-radius:2px;background:#fff;box-shadow:0 0 0 0.6px #e8edf0"></div>
<div class="t" style="left:601px;width:20.0px;text-align:center;top:547.58px;font-size:9.3px;color:#8c8c8c;font-weight:400;-webkit-text-stroke:0.15px #8c8c8c;">13</div>
<div style="position:absolute;left:626px;top:536.5px;width:20.0px;height:20.5px;border-radius:2px;background:#fff;box-shadow:0 0 0 0.6px #e8edf0"></div>
<svg style="position:absolute;left:632.4px;top:542.8px" width="8" height="9" viewBox="0 0 8 9"><path d="M2 1 L5.2 4.2 L2 7.4" fill="none" stroke="#029984" stroke-width="1.5"/></svg>
<div class="t" style="left:586.80px;top:546.25px;font-size:8.5px;color:#999;font-weight:400;letter-spacing:0px;-webkit-text-stroke:0.3px #999;">...</div>
</body></html>
